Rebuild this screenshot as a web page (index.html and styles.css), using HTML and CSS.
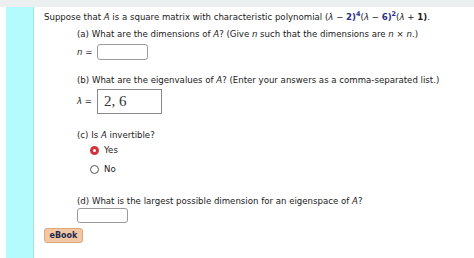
FILE: index.html
```html
<!DOCTYPE html>
<html lang="en">
<head>
    <meta charset="UTF-8">
    <title>Characteristic polynomial</title>
    <link rel="stylesheet" href="styles.css">
</head>
<body>
    <div class="topbar"></div>
    <div class="page">
        <div class="side"></div>
        <main class="content">
            <p class="intro">Suppose that <i>A</i> is a square matrix with characteristic polynomial (<i>λ</i> − <b class="hi">2)<sup>4</sup></b>(<i>λ</i> − <b class="hi">6)<sup>2</sup></b>(<i>λ</i> + <b>1)</b>.</p>

            <section class="part part-a">
                <p>(a) What are the dimensions of <i>A</i>? (Give <i>n</i> such that the dimensions are <i>n</i> × <i>n</i>.)</p>
                <div class="answer">
                    <span class="lbl"><i>n</i> =</span>
                    <span class="box round"></span>
                </div>
            </section>

            <section class="part part-b">
                <p>(b) What are the eigenvalues of <i>A</i>? (Enter your answers as a comma-separated list.)</p>
                <div class="answer">
                    <span class="lbl"><i>λ</i> =</span>
                    <span class="box square">2, 6</span>
                </div>
            </section>

            <section class="part part-c">
                <p>(c) Is <i>A</i> invertible?</p>
                <label class="radio first"><span class="dot on"></span>Yes</label>
                <label class="radio"><span class="dot"></span>No</label>
            </section>

            <section class="part part-d">
                <p>(d) What is the largest possible dimension for an eigenspace of <i>A</i>?</p>
                <span class="box round"></span>
            </section>

            <button class="ebook">eBook</button>
        </main>
    </div>
</body>
</html>
```

FILE: styles.css
```css
body {
    margin: 0;
    background: #fff;
    font-family: "DejaVu Sans", Verdana, sans-serif;
    font-size: 8.6px;
    line-height: 11px;
    color: #1a1a1a;
}
p { margin: 0; }

.topbar {
    height: 7px;
    background: #eceff0;
}
.page {
    display: flex;
    height: 251px;
}
.side {
    width: 27px;
    margin-left: 6px;
    background: #b3fbfd;
    border-right: 1px solid #9fe3e6;
}
.content {
    padding-left: 10px;
    padding-top: 5px;
}

.hi { color: #2a2f8a; }
b { font-weight: bold; }
sup { font-size: 6.5px; line-height: 0; }

.part { margin-left: 33px; }
.part-a { margin-top: 6px; }
.part-b { margin-top: 15px; }
.part-c { margin-top: 16px; }
.part-d { margin-top: 20px; }

.answer {
    display: flex;
    align-items: center;
    margin-top: 4px;
}
.part-b .answer { margin-top: 3px; }
.lbl {
    width: 20px;
    text-align: left;
}
.box {
    display: block;
    box-sizing: border-box;
    background: #fff;
    border: 1px solid #9a9a9a;
}
.box.round {
    width: 51px;
    height: 16px;
    border-radius: 3px;
}
.box.square {
    width: 65px;
    height: 25px;
    padding: 3px 0 0 6px;
    font-family: "Liberation Serif", "Times New Roman", serif;
    font-size: 15px;
    line-height: 17px;
    color: #333;
    border-color: #888;
}
.part-d .box {
    margin-top: 1px;
    height: 15px;
}

.radio {
    display: flex;
    align-items: center;
    margin: 6px 0 0 13px;
    height: 13px;
}
.radio.first { margin-top: 3px; }
.dot {
    box-sizing: border-box;
    width: 9px;
    height: 9px;
    border: 1.5px solid #555;
    border-radius: 50%;
    margin-right: 5px;
    background: #fff;
}
.dot.on {
    border: 3px solid #d2343c;
}

.ebook {
    display: block;
    margin-top: 5px;
    width: 39px;
    height: 15px;
    padding: 0;
    border: 1px solid #d9a982;
    border-radius: 3px;
    background: #f3c7a3;
    color: #1d2a50;
    font-family: "DejaVu Sans", sans-serif;
    font-size: 8px;
    font-weight: bold;
}
```
